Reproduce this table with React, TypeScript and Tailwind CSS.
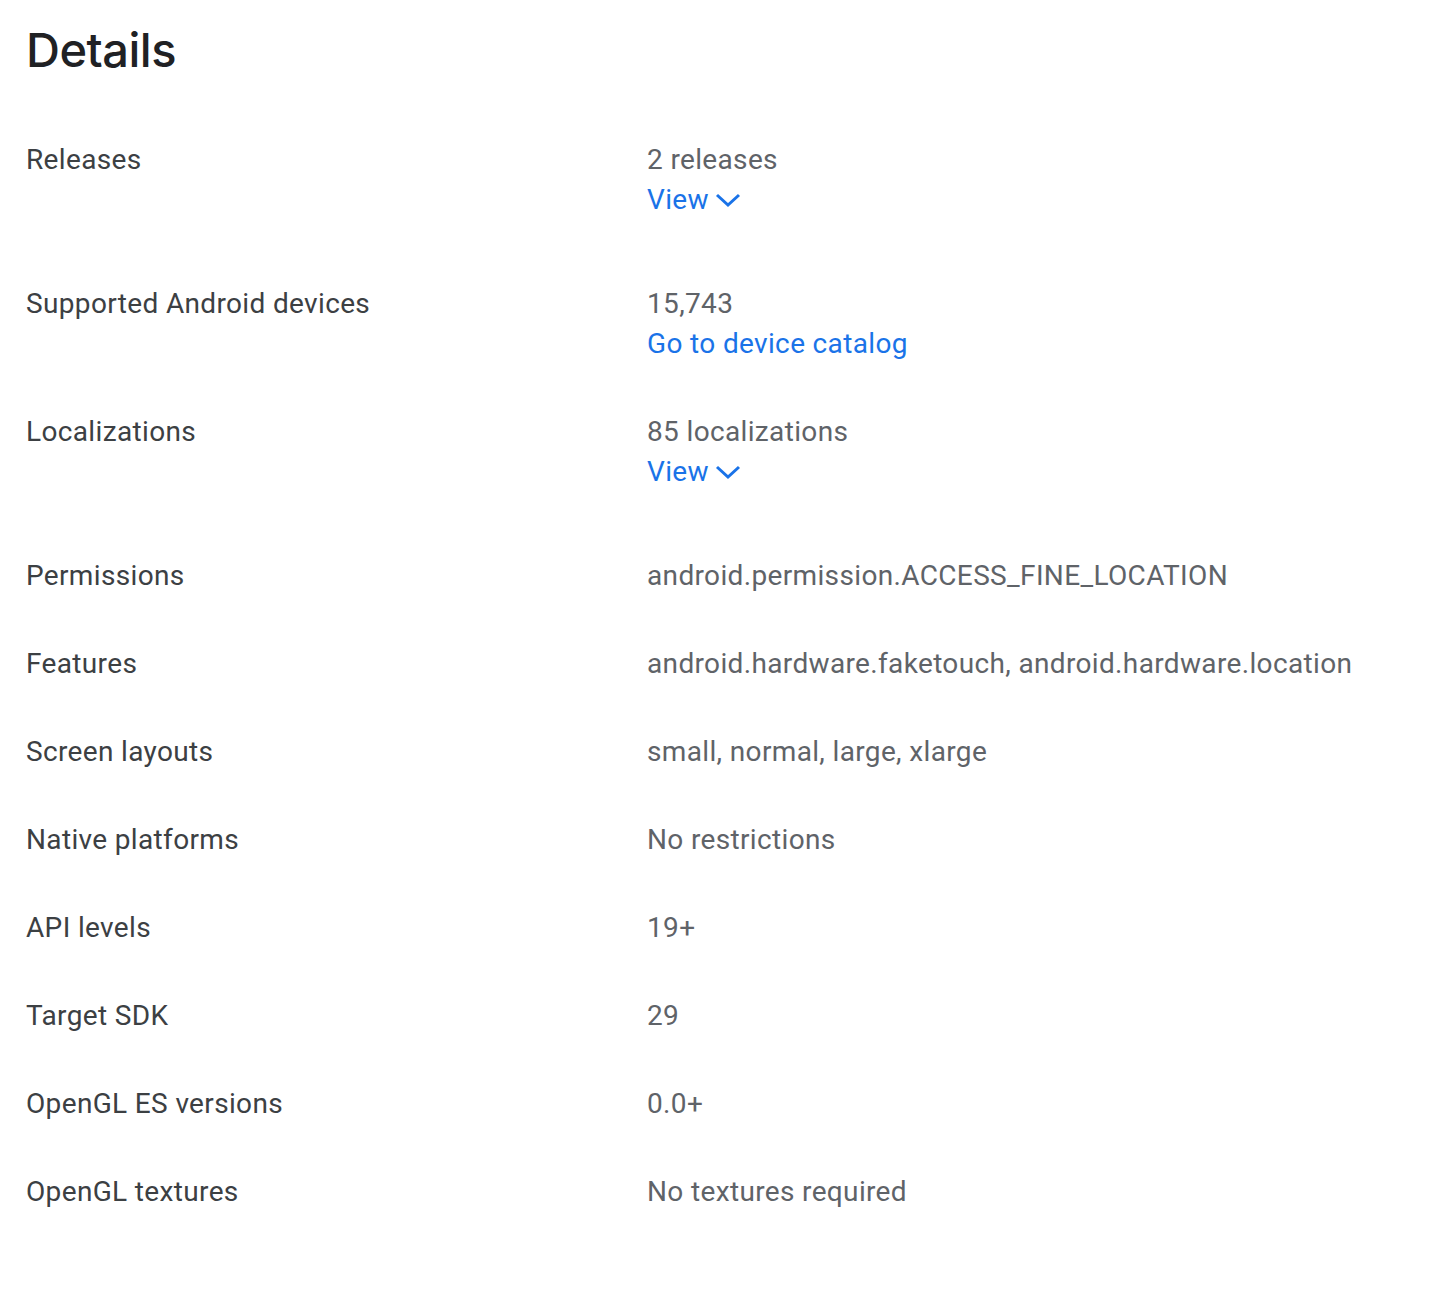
import React from 'react';

type Row = {
  label: string;
  value: string;
  link?: string;
  expand?: boolean;
};

const rows: Row[] = [
  { label: 'Releases', value: '2 releases', link: 'View', expand: true },
  { label: 'Supported Android devices', value: '15,743', link: 'Go to device catalog' },
  { label: 'Localizations', value: '85 localizations', link: 'View', expand: true },
  { label: 'Permissions', value: 'android.permission.ACCESS_FINE_LOCATION' },
  { label: 'Features', value: 'android.hardware.faketouch, android.hardware.location' },
  { label: 'Screen layouts', value: 'small, normal, large, xlarge' },
  { label: 'Native platforms', value: 'No restrictions' },
  { label: 'API levels', value: '19+' },
  { label: 'Target SDK', value: '29' },
  { label: 'OpenGL ES versions', value: '0.0+' },
  { label: 'OpenGL textures', value: 'No textures required' },
];

function Chevron() {
  return (
    <svg width="26" height="16" viewBox="0 0 26 16" className="ml-[6px]" fill="none">
      <path d="M2 3 L13 13 L24 3" stroke="#1a73e8" strokeWidth="3" />
    </svg>
  );
}

export default function App() {
  return (
    <div className="min-h-[1292px] bg-white px-[26px] pt-[22px] font-['Roboto',sans-serif]">
      <h1 className="text-[47px] leading-[56px] text-[#202124] font-['Inter',sans-serif] font-medium tracking-[-0.5px]">
        Details
      </h1>

      <div className="mt-[62px]">
        {rows.map(row => (
          <div key={row.label} className="flex pb-[48px] text-[28px] leading-[40px] tracking-[0.35px]">
            <div className="w-[621px] shrink-0 text-[#3c4043]">{row.label}</div>
            <div className="flex flex-col">
              <span className="text-[#5f6368]">{row.value}</span>
              {row.link && (
                <a className={`flex items-center text-[#1a73e8] ${row.expand ? 'pb-[16px]' : ''}`}>
                  {row.link}
                  {row.expand && <Chevron />}
                </a>
              )}
            </div>
          </div>
        ))}
      </div>
    </div>
  );
}
